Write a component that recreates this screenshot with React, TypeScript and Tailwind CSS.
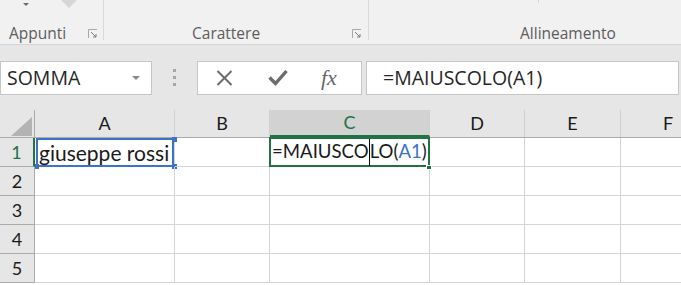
import React from 'react';

const cols = ['A', 'B', 'C', 'D', 'E', 'F'];
const rows = [1, 2, 3, 4, 5];

const cellFont = { fontFamily: "Lato, 'Open Sans', sans-serif" };
const uiFont = { fontFamily: "'Open Sans', 'Noto Sans', sans-serif" };

/** Ribbon (solo la fascia inferiore con i nomi dei gruppi) */
function Ribbon() {
  return (
    <div className="h-[45px] bg-[#f1f1f1] border-b border-[#d5d5d5] flex text-[15.5px] text-[#5c5c5c]" style={uiFont}>
      {/* Appunti */}
      <div className="relative w-[104px] border-r border-[#d9d9d9] h-[40px] flex items-end pl-[9px]">
        <span className="absolute left-[23px] top-[3px] w-0 h-0 border-l-[3px] border-r-[3px] border-t-[3px] border-l-transparent border-r-transparent border-t-[#6b6b6b]" />
        <span className="absolute left-[62px] -top-[9px] w-[14px] h-[14px] rotate-45 bg-[#d6d6d6]" />
        <span className="leading-[20px] mb-[-3px]">Appunti</span>
        <Launcher className="absolute left-[88px] top-[29px]" />
      </div>
      {/* Carattere */}
      <div className="relative w-[265px] border-r border-[#d9d9d9] h-[40px] flex items-end pl-[88px]">
        <span className="leading-[20px] mb-[-3px]">Carattere</span>
        <Launcher className="absolute left-[248px] top-[29px]" />
      </div>
      {/* Allineamento */}
      <div className="relative flex-1 h-[40px] flex items-end pl-[151px]">
        <span className="absolute left-[169px] top-0 w-px h-[3px] bg-[#d9d9d9]" />
        <span className="leading-[20px] mb-[-3px]">Allineamento</span>
      </div>
    </div>
  );
}

function Launcher({ className }: { className: string }) {
  return (
    <svg className={className} width="10" height="10" viewBox="0 0 10 10">
      <path d="M0.5 9 V0.5 H9" fill="none" stroke="#a8a8a8" strokeWidth="1" />
      <path d="M3 3 L8 8 M8 5 V8 H5" fill="none" stroke="#7a7a7a" strokeWidth="1" />
    </svg>
  );
}

/** Barra della formula */
function FormulaBar() {
  return (
    <div className="h-[65px] bg-[#e6e6e6] flex items-center" style={uiFont}>
      <div className="w-[152px] h-[34px] bg-white border border-[#c6c6c6] flex items-center justify-between pl-[6px] pr-[11px] text-[19.5px] text-[#262626]">
        <span>SOMMA</span>
        <span className="w-0 h-0 border-l-[4px] border-r-[4px] border-t-[4px] border-l-transparent border-r-transparent border-t-[#8a8a8a]" />
      </div>
      <div className="w-[45px] flex flex-col items-center gap-[4px]">
        <span className="w-[3px] h-[3px] bg-[#a6a6a6]" />
        <span className="w-[3px] h-[3px] bg-[#a6a6a6]" />
        <span className="w-[3px] h-[3px] bg-[#a6a6a6]" />
      </div>
      <div className="w-[165px] h-[34px] bg-white border border-[#c6c6c6] flex items-center">
        <svg className="ml-[18px]" width="17" height="16" viewBox="0 0 17 16">
          <path d="M1.5 1 L15.5 15 M15.5 1 L1.5 15" stroke="#6b6b6b" strokeWidth="2" />
        </svg>
        <svg className="ml-[35px]" width="20" height="17" viewBox="0 0 20 17">
          <path d="M1.5 8.5 L7.5 14.5 L18.5 2" fill="none" stroke="#6b6b6b" strokeWidth="3.4" />
        </svg>
        <span className="ml-[33px] italic text-[22px] text-[#666666] leading-none" style={{ fontFamily: "'Liberation Serif', serif" }}>fx</span>
      </div>
      <div className="ml-[4px] w-[313px] h-[34px] bg-white border border-[#c6c6c6] flex items-center pl-[16px] text-[19.5px] text-[#262626]">
        =MAIUSCOLO(A1)
      </div>
    </div>
  );
}

const widths = ['w-[140px]', 'w-[95px]', 'w-[160px]', 'w-[95px]', 'w-[96px]', 'w-[95px]'];

/** Griglia del foglio */
function Sheet() {
  return (
    <div className="bg-white text-[18px] text-[#1a1a1a]" style={cellFont}>
      {/* intestazioni colonna */}
      <div className="flex h-[28px] bg-[#e6e6e6] border-b border-[#ababab]">
        <div className="relative w-[35px] shrink-0 border-r border-[#ababab]">
          <svg className="absolute left-[11px] top-[7px]" width="21" height="19" viewBox="0 0 21 19">
            <path d="M21 0 V19 H0 Z" fill="#b3b3b3" />
          </svg>
        </div>
        {cols.map((c, i) => (
          <div
            key={c}
            className={`${widths[i]} shrink-0 flex items-center justify-center border-r border-[#d0d0d0] ${c === 'C' ? 'bg-[#d2d2d2] text-[#217346] border-b-2 border-b-[#217346]' : ''}`}
          >
            {c}
          </div>
        ))}
      </div>
      {rows.map((r) => (
        <div key={r} className="flex h-[29px]">
          <div className={`w-[35px] shrink-0 flex items-center justify-center bg-[#e6e6e6] border-b border-[#ababab] ${r === 1 ? 'bg-[#d2d2d2] text-[#217346] border-r-2 border-r-[#217346]' : 'border-r border-[#ababab]'}`}>
            {r}
          </div>
          {cols.map((c, i) => (
            <div key={c} className={`${widths[i]} shrink-0 relative border-r border-b border-[#d4d4d4]`}>
              {r === 1 && c === 'A' && (
                <>
                  <div className="absolute inset-[0_0_-1px_0] ml-[1px] border-2 border-[#3c72c8] flex items-center pl-[1px] whitespace-nowrap text-[21px]">
                    giuseppe rossi
                  </div>
                  <span className="absolute -right-[3px] -top-[1px] w-[5px] h-[5px] bg-[#3c72c8]" />
                  <span className="absolute -right-[3px] -bottom-[3px] w-[5px] h-[5px] bg-[#3c72c8]" />
                  <span className="absolute left-0 -bottom-[3px] w-[4px] h-[5px] bg-[#3c72c8]" />
                </>
              )}
              {r === 1 && c === 'C' && (
                <>
                  <div className="absolute -left-[1px] -top-px -right-[1px] -bottom-[1px] border-2 border-[#217346] flex items-center pl-[1px] whitespace-nowrap z-10 text-[18.6px]">
                    <span className="shrink-0">=MAIUSCO</span>
                    <span className="shrink-0 w-px h-[27px] bg-black" />
                    <span className="shrink-0">LO(</span>
                    <span className="shrink-0 text-[#3c72c8]">A1</span>
                    <span className="shrink-0">)</span>
                  </div>
                  <span className="absolute -right-[3px] -bottom-[4px] w-[6px] h-[5px] bg-[#217346] border border-white z-20" />
                </>
              )}
            </div>
          ))}
        </div>
      ))}
    </div>
  );
}

export default function App() {
  return (
    <div className="w-[681px] h-[285px] overflow-hidden bg-white">
      <Ribbon />
      <FormulaBar />
      <Sheet />
    </div>
  );
}
